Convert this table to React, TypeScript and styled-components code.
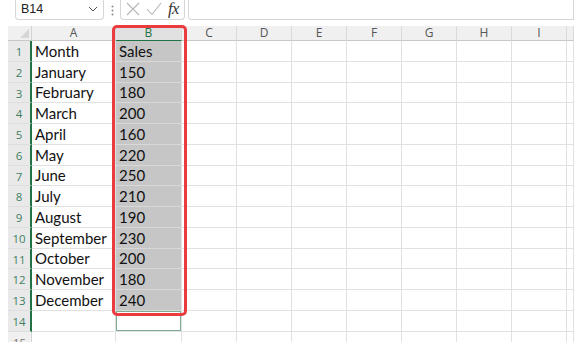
import React from 'react';
import styled, { createGlobalStyle } from 'styled-components';

const GlobalStyle = createGlobalStyle`
  html, body {
    margin: 0;
    padding: 0;
    background: #ffffff;
    overflow: hidden;
  }
  body {
    width: 582px;
    height: 342px;
    font-family: "Lato", "Liberation Sans", sans-serif;
  }
`;

const FormulaBar = styled.div`
  display: flex;
  align-items: stretch;
  height: 20px;
  padding-left: 15px;
  padding-right: 8px;
`;

const NameBox = styled.div`
  width: 89px;
  box-sizing: border-box;
  display: flex;
  align-items: center;
  justify-content: space-between;
  padding: 0 5px 1px 5px;
  border: 1px solid #d6d6d6;
  border-top: none;
  border-radius: 0 0 4px 4px;
  font: 12.5px "Liberation Sans", sans-serif;
  color: #222222;
`;

const Grip = styled.div`
  width: 16px;
  display: flex;
  align-items: center;
  justify-content: center;
`;

const CommandBox = styled.div`
  width: 65px;
  box-sizing: border-box;
  display: flex;
  align-items: center;
  justify-content: space-around;
  padding: 0 2px 1px;
  border: 1px solid #d6d6d6;
  border-top: none;
  border-radius: 0 0 4px 4px;
`;

const Fx = styled.span`
  font: italic 16.5px "Liberation Serif", serif;
  line-height: 1;
  color: #333333;
  letter-spacing: -0.5px;
`;

const FormulaInput = styled.div`
  flex: 1;
  margin-left: 3px;
  border: 1px solid #d6d6d6;
  border-top: none;
  border-radius: 0 0 0 4px;
`;

const Sheet = styled.div`
  position: relative;
  margin: 6px 0 0 8px;
  display: grid;
  grid-template-columns: 24px 84px 66px repeat(7, 55px) 7px;
  grid-template-rows: 15px;
  grid-auto-rows: 20.75px;
  width: 566px;
`;

const Corner = styled.div`
  background: #f0f0f0;
  border-right: 1px solid #d4d4d4;
  border-bottom: 1px solid #c8c8c8;
  box-sizing: border-box;
  display: flex;
  align-items: flex-end;
  justify-content: flex-end;
  padding: 0 2px 2px 0;
`;

const ColHead = styled.div<{ $active?: boolean }>`
  box-sizing: border-box;
  background: ${p => (p.$active ? '#e1e1e1' : '#f0f0f0')};
  border-right: 1px solid #dadada;
  border-bottom: 1px solid ${p => (p.$active ? '#217346' : '#c8c8c8')};
  display: flex;
  align-items: center;
  justify-content: center;
  font: 12px "Open Sans", "Liberation Sans", sans-serif;
  line-height: 1;
  color: ${p => (p.$active ? '#217346' : '#555555')};
`;

const RowHead = styled.div<{ $active?: boolean }>`
  box-sizing: border-box;
  background: ${p => (p.$active ? '#e9e9e9' : '#f0f0f0')};
  border-right: ${p => (p.$active ? '2px solid #217346' : '1px solid #d4d4d4')};
  border-bottom: 1px solid #dedede;
  display: flex;
  align-items: center;
  justify-content: center;
  padding-top: 2px;
  font: 11.5px "Open Sans", "Liberation Sans", sans-serif;
  line-height: 1;
  color: ${p => (p.$active ? '#3f7f62' : '#777777')};
`;

const Cell = styled.div<{ $selected?: boolean; $current?: boolean }>`
  box-sizing: border-box;
  background: ${p => (p.$selected ? '#c6c6c6' : '#ffffff')};
  border-right: 1px solid #e1e1e1;
  border-bottom: 1px solid ${p => (p.$selected ? '#d8d8d8' : '#e1e1e1')};
  box-shadow: ${p => (p.$current ? 'inset 0 0 0 1px #7fab93' : 'none')};
  display: flex;
  align-items: flex-end;
  padding: 0 0 1px 3px;
  font-size: 15px;
  color: #111111;
  white-space: nowrap;
  overflow: hidden;
`;

const Highlight = styled.div`
  position: absolute;
  left: 104px;
  top: -1px;
  width: 75px;
  height: 291px;
  box-sizing: border-box;
  border: 3px solid #ea3b3f;
  border-radius: 5px;
  pointer-events: none;
`;

const columns = ['A', 'B', 'C', 'D', 'E', 'F', 'G', 'H', 'I', ''];

const data: [string, string][] = [
  ['Month', 'Sales'],
  ['January', '150'],
  ['February', '180'],
  ['March', '200'],
  ['April', '160'],
  ['May', '220'],
  ['June', '250'],
  ['July', '210'],
  ['August', '190'],
  ['September', '230'],
  ['October', '200'],
  ['November', '180'],
  ['December', '240'],
  ['', ''],
  ['', ''],
];

const Chevron = () => (
  <svg width="10" height="6" viewBox="0 0 10 6">
    <polyline points="1,1 5,5 9,1" fill="none" stroke="#555" strokeWidth="1" />
  </svg>
);

const Dots = () => (
  <svg width="3" height="11" viewBox="0 0 3 11">
    <circle cx="1.5" cy="1.5" r="1" fill="#8a8a8a" />
    <circle cx="1.5" cy="5.5" r="1" fill="#8a8a8a" />
    <circle cx="1.5" cy="9.5" r="1" fill="#8a8a8a" />
  </svg>
);

const Cross = () => (
  <svg width="14" height="14" viewBox="0 0 14 14">
    <path d="M1 1 L13 13 M13 1 L1 13" stroke="#b5b5b5" strokeWidth="1.1" />
  </svg>
);

const Check = () => (
  <svg width="16" height="14" viewBox="0 0 16 14">
    <polyline points="1,7 6,12.5 15,1" fill="none" stroke="#b5b5b5" strokeWidth="1.1" />
  </svg>
);

const CornerMark = () => (
  <svg width="9" height="9" viewBox="0 0 9 9">
    <polygon points="9,0 9,9 0,9" fill="#d6d6d6" />
  </svg>
);

export default function App() {
  return (
    <>
      <GlobalStyle />
      <FormulaBar>
        <NameBox>
          <span>B14</span>
          <Chevron />
        </NameBox>
        <Grip>
          <Dots />
        </Grip>
        <CommandBox>
          <Cross />
          <Check />
          <Fx>fx</Fx>
        </CommandBox>
        <FormulaInput />
      </FormulaBar>

      <Sheet>
        <Corner>
          <CornerMark />
        </Corner>
        {columns.map((c, i) => (
          <ColHead key={i} $active={c === 'B'}>
            {c}
          </ColHead>
        ))}
        {data.map(([month, sales], r) => (
          <React.Fragment key={r}>
            <RowHead $active={r < 14}>{r + 1}</RowHead>
            <Cell>{month}</Cell>
            <Cell $selected={r < 13} $current={r === 13}>
              {sales}
            </Cell>
            {columns.slice(2).map((c, i) => (
              <Cell key={i} />
            ))}
          </React.Fragment>
        ))}
        <Highlight />
      </Sheet>
    </>
  );
}
